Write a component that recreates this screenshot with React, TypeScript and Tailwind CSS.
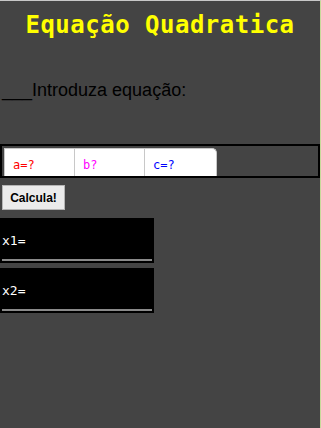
import React from 'react';

const mono = { fontFamily: '"DejaVu Sans Mono", "Liberation Mono", monospace' };

function Tab({ label, color, last }: { label: string; color: string; last?: boolean }) {
  return (
    <div
      className={`h-[28px] w-[70px] bg-white border-t border-l border-[#c8c8c8] flex items-center pl-[8px] pt-[5px] text-[12px] ${color} ${last ? 'rounded-tr-[5px] border-r w-[73px]' : ''}`}
    >
      {label}
    </div>
  );
}

function Output({ label }: { label: string }) {
  return (
    <div className="w-[154px] h-[45px] bg-black px-[2px] flex flex-col">
      <div className="flex-1 flex items-center text-white text-[13px] pt-[5px]">{label}</div>
      <div className="h-[2px] bg-[#8a8a8a] mb-[2px]" />
    </div>
  );
}

export default function App() {
  return (
    <div
      className="w-[321px] h-[428px] bg-[#444444] border-t border-t-[#c8c8c8] border-r border-r-[#c8d99a] overflow-hidden"
      style={{ fontFamily: '"Liberation Sans", Arial, sans-serif' }}
    >
      <h1
        className="text-center text-[24px] font-bold text-[#ffff00] tracking-[0.5px] leading-none mt-[12px]"
        style={mono}
      >
        Equação Quadratica
      </h1>

      <p className="text-[18px] text-black leading-none mt-[44px] pl-[2px]">___Introduza equação:</p>

      <div className="mt-[45px] h-[34px] border-2 border-black flex items-end pl-[2px]" style={mono}>
        <Tab label="a=?" color="text-[#ff0000]" />
        <Tab label="b?" color="text-[#ff00ff]" />
        <Tab label="c=?" color="text-[#0000ff]" last />
      </div>

      <button className="ml-[2px] mt-[7px] w-[63px] h-[25px] bg-[#ebebeb] border border-[#b5b5b5] text-[12px] font-bold text-black">
        Calcula!
      </button>

      <div className="mt-[8px] flex flex-col gap-[5px]" style={mono}>
        <Output label="x1=" />
        <Output label="x2=" />
      </div>
    </div>
  );
}
